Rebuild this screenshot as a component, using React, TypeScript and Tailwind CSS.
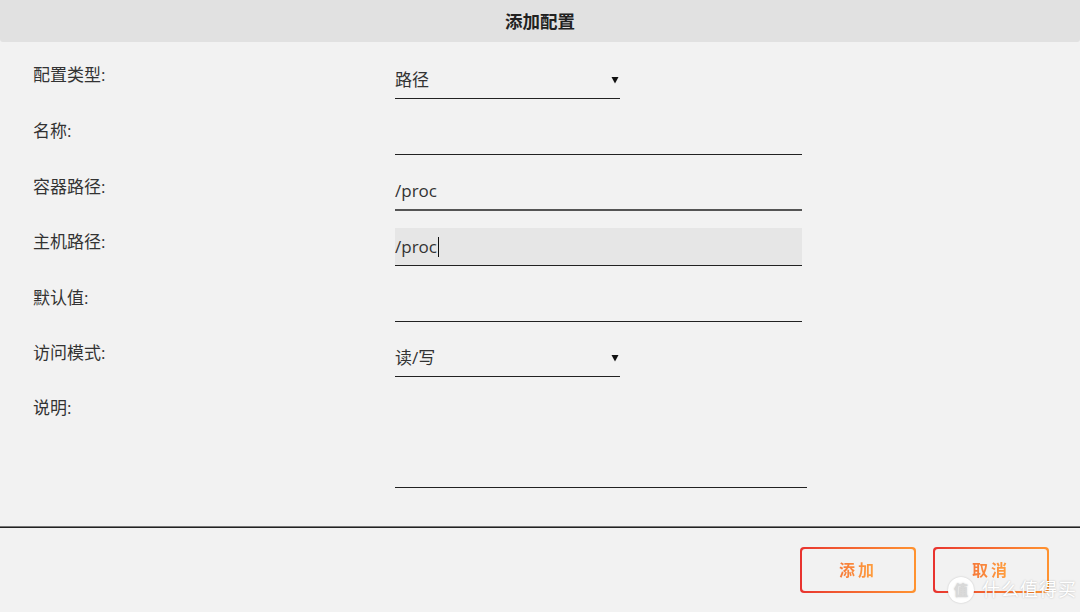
import React from "react";

const font = { fontFamily: '"Open Sans", "Noto Sans CJK SC", sans-serif' };

function Arrow() {
  return (
    <svg width="8" height="8" viewBox="0 0 8 8" className="mr-[1px]">
      <path d="M0.5 1 L7.5 1 L4 7.5 Z" fill="#111" />
    </svg>
  );
}

function Label({ children }: { children: React.ReactNode }) {
  return (
    <div className="w-[395px] shrink-0 pl-[33px] pt-[3px] text-[17px] leading-[22px] text-[#333]">
      {children}
    </div>
  );
}

function SelectField({ value }: { value: string }) {
  return (
    <div className="flex h-[38px] w-[225px] items-center justify-between border-b border-[#222] text-[17px] text-[#333]">
      <span>{value}</span>
      <Arrow />
    </div>
  );
}

function TextField({ value, active, thick, cursor }: { value?: string; active?: boolean; thick?: boolean; cursor?: boolean }) {
  return (
    <div
      className={`flex h-[38px] w-[407px] items-center text-[17px] text-[#333] ${
        active ? "bg-[#e6e6e6]" : ""
      } ${thick ? "border-b-2 border-[#555]" : "border-b border-[#222]"}`}
    >
      <span>{value}</span>
      {cursor && <span className="ml-[1px] inline-block h-[20px] w-px bg-[#111]" />}
    </div>
  );
}

function GradButton({ text }: { text: string }) {
  return (
    <div className="rounded-[4px] bg-gradient-to-r from-[#e8322f] to-[#ff9330] p-[2px]">
      <div className="flex h-[42px] w-[112px] items-center justify-center rounded-[3px] bg-[#f2f2f2]">
        <span className="bg-gradient-to-r from-[#f67a3a] to-[#ffa03e] bg-clip-text text-[16px] font-bold tracking-[3px] text-transparent">
          {text}
        </span>
      </div>
    </div>
  );
}

export default function App() {
  return (
    <div className="relative flex h-[612px] w-[1080px] flex-col overflow-hidden bg-[#f2f2f2]" style={font}>
      <div className="flex h-[42px] shrink-0 items-center justify-center rounded-b-[3px] bg-[#e1e1e1] text-[17.5px] font-bold text-[#222]">
        添加配置
      </div>
      <div className="flex flex-col pt-[19px]">
        <div className="mb-[18px] flex">
          <Label>配置类型:</Label>
          <SelectField value="路径" />
        </div>
        <div className="mb-[18px] flex">
          <Label>名称:</Label>
          <TextField />
        </div>
        <div className="mb-[17px] flex">
          <Label>容器路径:</Label>
          <TextField value="/proc" thick />
        </div>
        <div className="mb-[18px] flex">
          <Label>主机路径:</Label>
          <TextField value="/proc" active cursor />
        </div>
        <div className="mb-[17px] flex">
          <Label>默认值:</Label>
          <TextField />
        </div>
        <div className="mb-[17px] flex">
          <Label>访问模式:</Label>
          <SelectField value="读/写" />
        </div>
        <div className="flex">
          <Label>说明:</Label>
          <div className="h-[94px] w-[412px] border-b border-[#222]" />
        </div>
      </div>
      <div className="mt-[38px] h-[2px] w-full border-t border-[#777] bg-[#222]" />
      <div className="flex justify-end gap-[17px] pr-[31px] pt-[19px]">
        <GradButton text="添加" />
        <GradButton text="取消" />
      </div>
      <div className="absolute left-[948px] top-[576px] flex items-center gap-[8px] text-white" style={{ textShadow: "0 0 2px rgba(0,0,0,0.25)" }}>
        <div className="flex h-[26px] w-[26px] items-center justify-center rounded-full bg-white text-[14px] font-bold text-[#d9d9d9]" style={{ boxShadow: "0 0 2px rgba(0,0,0,0.2)" }}>
          值
        </div>
        <span className="text-[18px] tracking-[1px]">什么值得买</span>
      </div>
    </div>
  );
}
